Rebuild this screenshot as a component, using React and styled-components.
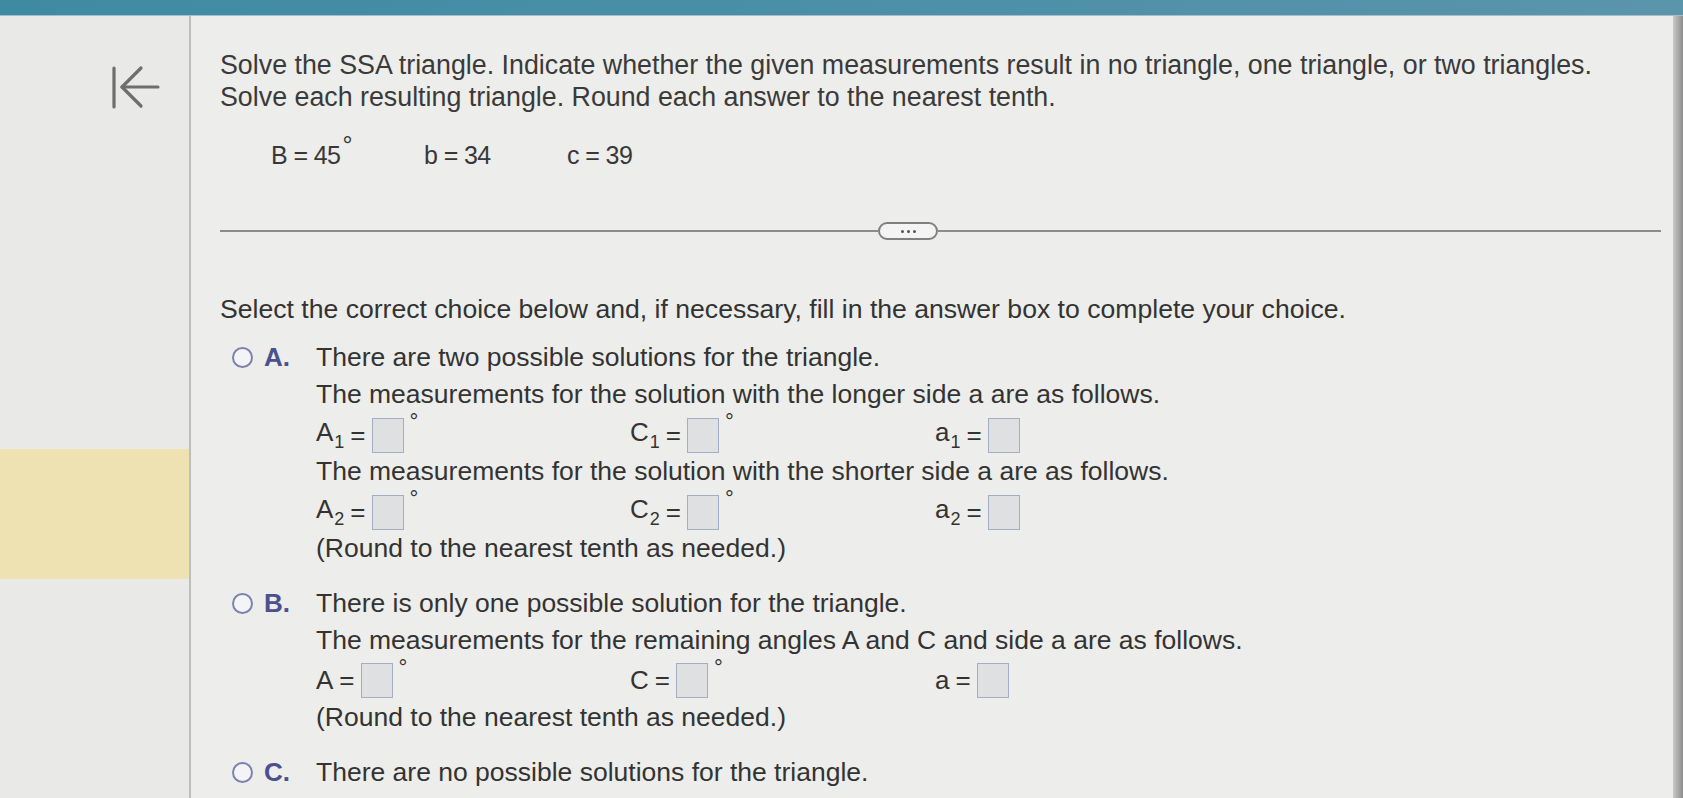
import styled, { createGlobalStyle } from "styled-components";

const GlobalStyle = createGlobalStyle`
	html, body {
		margin: 0;
		padding: 0;
		background: #ededeb;
	}
	body {
		font-family: "Liberation Sans", Arial, sans-serif;
		color: #333;
	}
`;

const answerRows = {
	A: [
		[
			{ label: "A", sub: "1", deg: true },
			{ label: "C", sub: "1", deg: true },
			{ label: "a", sub: "1" },
		],
		[
			{ label: "A", sub: "2", deg: true },
			{ label: "C", sub: "2", deg: true },
			{ label: "a", sub: "2" },
		],
	],
	B: [
		[
			{ label: "A", deg: true },
			{ label: "C", deg: true },
			{ label: "a" },
		],
	],
};

const BackIcon = () => (
	<svg width="52" height="46" viewBox="0 0 52 46">
		<g stroke="#6e6e6e" strokeWidth="3.2" fill="none" strokeLinecap="round" strokeLinejoin="round">
			<line x1="4" y1="3" x2="4" y2="42" />
			<polyline points="31,3 12,22 31,41" />
			<line x1="12" y1="22" x2="48" y2="22" />
		</g>
	</svg>
);

const AnswerRow = ({ cells }) => (
	<Row>
		{cells.map((c, i) => (
			<Cell key={i}>
				<Var>
					{c.label}
					{c.sub && <Sub>{c.sub}</Sub>}
				</Var>
				<Eq>=</Eq>
				<Box />
				{c.deg && <Deg>°</Deg>}
			</Cell>
		))}
	</Row>
);

const App = () => {
	return (
		<>
			<GlobalStyle />
			<Page>
				<TopBar />
				<Body>
					<Sidebar>
						<BackButton>
							<BackIcon />
						</BackButton>
						<Highlight />
					</Sidebar>
					<Main>
						<Header>
							Solve the SSA triangle. Indicate whether the given measurements result in no triangle, one triangle, or two triangles.
							<br />
							Solve each resulting triangle. Round each answer to the nearest tenth.
						</Header>
						<Givens>
							<Given $w={153}>B = 45<GivenDeg>°</GivenDeg></Given>
							<Given $w={143}>b = 34</Given>
							<Given>c = 39</Given>
						</Givens>
						<Divider>
							<LeftLine />
							<Pill>
								<Dot />
								<Dot />
								<Dot />
							</Pill>
							<RightLine />
						</Divider>
						<Prompt>
							Select the correct choice below and, if necessary, fill in the answer box to complete your choice.
						</Prompt>
						<Options>
							<Option>
								<Radio />
								<Letter>A.</Letter>
								<Content>
									<Line>There are two possible solutions for the triangle.</Line>
									<Line>The measurements for the solution with the longer side a are as follows.</Line>
									<AnswerRow cells={answerRows.A[0]} />
									<Line>The measurements for the solution with the shorter side a are as follows.</Line>
									<AnswerRow cells={answerRows.A[1]} />
									<Line>(Round to the nearest tenth as needed.)</Line>
								</Content>
							</Option>
							<Option>
								<Radio />
								<Letter>B.</Letter>
								<Content>
									<Line>There is only one possible solution for the triangle.</Line>
									<Line>The measurements for the remaining angles A and C and side a are as follows.</Line>
									<AnswerRow cells={answerRows.B[0]} />
									<Line>(Round to the nearest tenth as needed.)</Line>
								</Content>
							</Option>
							<Option>
								<Radio />
								<Letter>C.</Letter>
								<Content>
									<Line>There are no possible solutions for the triangle.</Line>
								</Content>
							</Option>
						</Options>
					</Main>
					<Edge />
				</Body>
			</Page>
		</>
	);
};

export default App;

const Page = styled.div`
	width: 100%;
	height: 100vh;
	display: flex;
	flex-direction: column;
	overflow: hidden;
`;

const TopBar = styled.div`
	height: 15px;
	flex-shrink: 0;
	background: linear-gradient(90deg, #3f8aa3 0%, #4b8fa8 50%, #5a95ac 100%);
	border-bottom: 1px solid #a7bec7;
`;

const Body = styled.div`
	flex: 1;
	display: flex;
	flex-direction: row;
`;

const Sidebar = styled.div`
	width: 189px;
	flex-shrink: 0;
	background: #e9e9e7;
	border-right: 2px solid #bdbdbd;
	display: flex;
	flex-direction: column;
`;

const BackButton = styled.div`
	margin: 49px 0 0 110px;
	height: 46px;
`;

const Highlight = styled.div`
	margin-top: 338px;
	height: 130px;
	background: #eee2b3;
`;

const Main = styled.div`
	flex: 1;
	padding: 33px 12px 0 29px;
	display: flex;
	flex-direction: column;
`;

const Edge = styled.div`
	width: 10px;
	flex-shrink: 0;
	background: linear-gradient(90deg, #c9c9c9, #8d8d8d);
`;

const Header = styled.div`
	font-size: 26.8px;
	line-height: 32px;
	color: #3a3a3a;
	white-space: nowrap;
`;

const Givens = styled.div`
	display: flex;
	flex-direction: row;
	margin: 28px 0 0 51px;
	font-size: 25px;
	color: #383838;
`;

const Given = styled.span`
	width: ${(p) => (p.$w ? `${p.$w}px` : "auto")};
	letter-spacing: -0.6px;
`;

const GivenDeg = styled.span`
	font-size: 25px;
	position: relative;
	top: -10px;
	margin-left: 2px;
`;

const Divider = styled.div`
	display: flex;
	flex-direction: row;
	align-items: center;
	margin-top: 52px;
	height: 18px;
`;

const LeftLine = styled.div`
	width: 658px;
	height: 2px;
	background: #8c8c8c;
`;

const RightLine = styled.div`
	flex: 1;
	height: 2px;
	background: #8c8c8c;
`;

const Pill = styled.div`
	width: 56px;
	height: 14px;
	border: 2px solid #808080;
	border-radius: 9px;
	background: #f4f4f4;
	display: flex;
	align-items: center;
	justify-content: center;
	gap: 3px;
`;

const Dot = styled.span`
	width: 3px;
	height: 3px;
	border-radius: 50%;
	background: #555;
`;

const Prompt = styled.div`
	margin-top: 53px;
	font-size: 26.6px;
	line-height: 32px;
	color: #333;
	white-space: nowrap;
`;

const Options = styled.div`
	display: flex;
	flex-direction: column;
	gap: 18px;
	margin: 14px 0 0 12px;
`;

const Option = styled.div`
	display: grid;
	grid-template-columns: 32px 52px 1fr;
	align-items: start;
`;

const Radio = styled.span`
	margin-top: 8px;
	width: 17px;
	height: 17px;
	border: 2px solid #7c82b0;
	border-radius: 50%;
	background: #f4f4f6;
`;

const Letter = styled.span`
	font-size: 26px;
	line-height: 37px;
	font-weight: 700;
	color: #4a5090;
`;

const Content = styled.div`
	display: flex;
	flex-direction: column;
`;

const Line = styled.div`
	font-size: 26.5px;
	line-height: 37px;
	color: #333;
	white-space: nowrap;
`;

const Row = styled.div`
	display: grid;
	grid-template-columns: 314px 305px auto;
	height: 40px;
	align-items: start;
`;

const Cell = styled.div`
	display: flex;
	flex-direction: row;
	align-items: center;
	padding-top: 4px;
	font-size: 26px;
	color: #333;
`;

const Var = styled.span`
	position: relative;
`;

const Sub = styled.sub`
	font-size: 18px;
	vertical-align: -7px;
	margin-left: 1px;
`;

const Eq = styled.span`
	margin: 0 6px 0 6px;
`;

const Box = styled.span`
	width: 30px;
	height: 33px;
	border: 1.5px solid #a3aec4;
	background: #dfe0e2;
`;

const Deg = styled.span`
	align-self: flex-start;
	margin: -6px 0 0 6px;
	font-size: 22px;
	line-height: 1;
`;
